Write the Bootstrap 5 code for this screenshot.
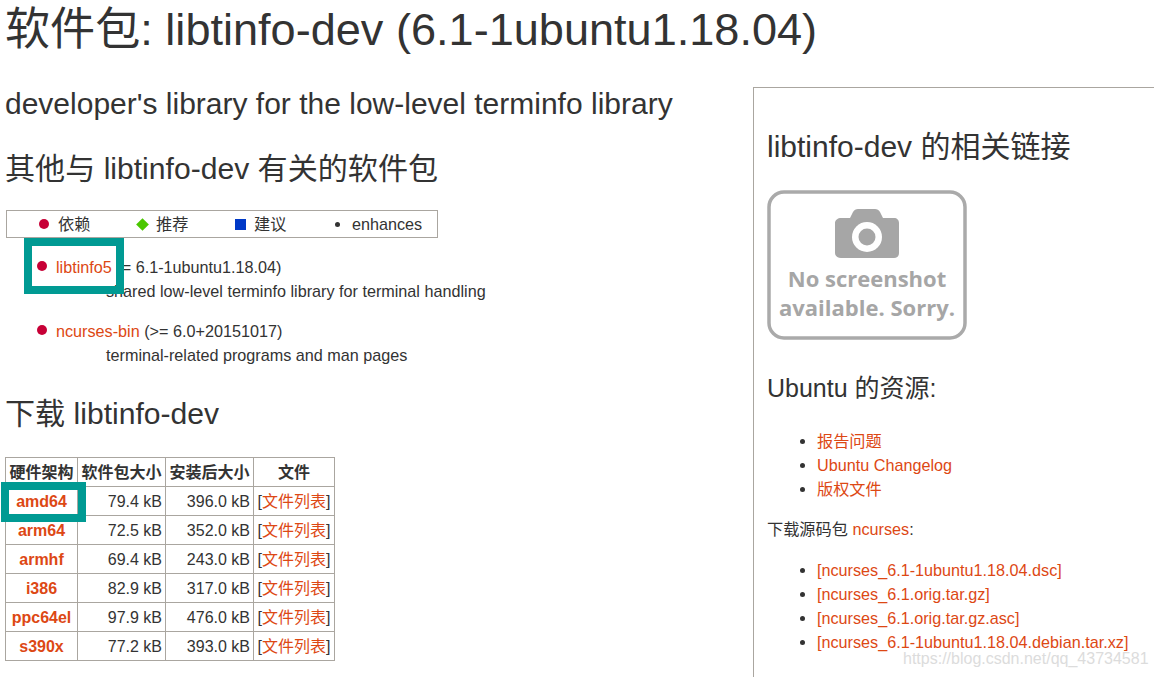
<!DOCTYPE html>
<html lang="zh">
<head>
<meta charset="utf-8">
<title>libtinfo-dev</title>
<link href="https://cdn.jsdelivr.net/npm/bootstrap@5.3.0/dist/css/bootstrap.min.css" rel="stylesheet">
<style>
html,body{height:677px;overflow:hidden}
body{font-family:"Liberation Sans","Noto Sans CJK SC",sans-serif;font-size:16.2px;color:#333;background:#fff;line-height:24px;position:relative}
a{color:#dd4814;text-decoration:none}
.page-wrap{padding-left:5px}
.pkg-title{font-size:45.1px;font-weight:400;line-height:48px;margin:6px 0 0;height:52px;color:#333}
.cols{display:flex;align-items:flex-start}
.main-col{width:748px;flex:none}
.side-col{flex:1;height:620px;margin-top:29px;border-left:1px solid #aaa6a0;border-top:1px solid #aaa6a0;padding:0 0 0 13px}
.tagline{font-size:30px;font-weight:400;line-height:34px;margin:29px 0 0;color:#333}
.sec-h{font-size:30.1px;font-weight:400;line-height:36px;margin:0;color:#333}
.sec-h.one{margin-top:30px}
.sec-h.two{margin-top:29px}
.legend-bar{width:432px;height:28px;border:1px solid #aaa6a0;margin:23px 0 0 1px;display:flex;line-height:27px}
.legend-bar span{display:flex;align-items:center;gap:9px;position:relative}
.lg1{margin-left:32px;width:98px}.lg2{width:98px}.lg3{width:98px}
.mk{display:inline-block;flex:none}
.dot{width:10px;height:10px;border-radius:50%;background:#c70036}
.dia{width:9px;height:9px;background:#4ac700;transform:rotate(45deg);margin-left:1px}
.sq{width:11px;height:11px;background:#0039c7;margin-right:-1px}
.pt{width:5px;height:5px;border-radius:50%;background:#333;margin:0 3px 0 2px}
.deps{margin:17px 0 0;padding:0;list-style:none}
.deps li{position:relative;padding-left:51px;margin-bottom:16px}
.deps .dot{position:absolute;left:32px;top:6px}
.deps .dsc{display:block;padding-left:50px}
.pkg-tbl{border-collapse:collapse;margin-top:25px;table-layout:fixed;width:329px;font-size:16px}
.pkg-tbl th,.pkg-tbl td{border:1px solid #aaa6a0;height:29px;padding:0;line-height:27px;white-space:nowrap}
.pkg-tbl thead th{text-align:center;color:#333;font-weight:700}
.pkg-tbl tbody th{text-align:center}
.pkg-tbl .sz{text-align:right;padding-right:3px}
.pkg-tbl .fl{text-align:center}
.side-h{font-size:30px;font-weight:400;line-height:36px;margin:41px 0 0;color:#333}
.shot{display:block;margin-top:25px}
.side-h2{font-size:25px;font-weight:400;line-height:30px;margin:33px 0 0;color:#333}
.link-list{padding-left:50px;list-style:disc}
.res-list{margin:26px 0 0}
.src-list{margin:17px 0 0}
.side-p{margin:16px 0 0}
.hl-box{position:absolute;border:8px solid #009a93;pointer-events:none}
.hl-a{left:24px;top:238px;width:100px;height:56px}
.hl-b{left:1px;top:482px;width:85px;height:40px}
.wm{position:absolute;left:903px;top:647px;font-size:16px;color:#dcdcdc;white-space:nowrap}
</style>
</head>
<body>
<div class="page-wrap">
<h1 class="pkg-title">软件包: libtinfo-dev (6.1-1ubuntu1.18.04)</h1>
<div class="cols">
<div class="main-col">
<h2 class="tagline">developer's library for the low-level terminfo library</h2>
<h2 class="sec-h one">其他与 libtinfo-dev 有关的软件包</h2>
<div class="legend-bar">
<span class="lg1"><i class="mk dot"></i>依赖</span>
<span class="lg2"><i class="mk dia"></i>推荐</span>
<span class="lg3"><i class="mk sq"></i>建议</span>
<span><i class="mk pt"></i>enhances</span>
</div>
<ul class="deps">
<li><i class="mk dot"></i><a href="#">libtinfo5</a> (= 6.1-1ubuntu1.18.04)<span class="dsc">shared low-level terminfo library for terminal handling</span></li>
<li><i class="mk dot"></i><a href="#">ncurses-bin</a> (&gt;= 6.0+20151017)<span class="dsc">terminal-related programs and man pages</span></li>
</ul>
<h2 class="sec-h two">下载 libtinfo-dev</h2>
<table class="pkg-tbl">
<colgroup><col style="width:72px"><col style="width:88px"><col style="width:88px"><col style="width:81px"></colgroup>
<thead><tr><th>硬件架构</th><th>软件包大小</th><th>安装后大小</th><th>文件</th></tr></thead>
<tbody>
<tr><th><a href="#">amd64</a></th><td class="sz">79.4 kB</td><td class="sz">396.0 kB</td><td class="fl">[<a href="#">文件列表</a>]</td></tr>
<tr><th><a href="#">arm64</a></th><td class="sz">72.5 kB</td><td class="sz">352.0 kB</td><td class="fl">[<a href="#">文件列表</a>]</td></tr>
<tr><th><a href="#">armhf</a></th><td class="sz">69.4 kB</td><td class="sz">243.0 kB</td><td class="fl">[<a href="#">文件列表</a>]</td></tr>
<tr><th><a href="#">i386</a></th><td class="sz">82.9 kB</td><td class="sz">317.0 kB</td><td class="fl">[<a href="#">文件列表</a>]</td></tr>
<tr><th><a href="#">ppc64el</a></th><td class="sz">97.9 kB</td><td class="sz">476.0 kB</td><td class="fl">[<a href="#">文件列表</a>]</td></tr>
<tr><th><a href="#">s390x</a></th><td class="sz">77.2 kB</td><td class="sz">393.0 kB</td><td class="fl">[<a href="#">文件列表</a>]</td></tr>
</tbody>
</table>
</div>
<aside class="side-col">
<h3 class="side-h">libtinfo-dev 的相关链接</h3>
<svg class="shot" width="200" height="150" viewBox="0 0 200 150" role="img" aria-label="No screenshot available">
<rect x="2" y="2" width="196" height="146" rx="15" fill="#fff" stroke="#aaa" stroke-width="3.5"/>
<path fill="#a6a6a6" d="M74 28h9l3-6c1-2 3-3 5-3h17c2 0 4 1 5 3l3 6h11c3 0 5 2 5 5v30c0 3-2 5-5 5H74c-3 0-6-2-6-5V33c0-3 3-5 6-5z"/>
<circle cx="100" cy="47" r="15" fill="#fff"/><circle cx="100" cy="47" r="8.5" fill="#a6a6a6"/>
<text x="100" y="97" text-anchor="middle" font-family="Open Sans" font-weight="700" font-size="22" fill="#a6a6a6">No screenshot</text>
<text x="100" y="126" text-anchor="middle" font-family="Open Sans" font-weight="700" font-size="22" fill="#a6a6a6">available. Sorry.</text>
</svg>
<h3 class="side-h2">Ubuntu 的资源:</h3>
<ul class="link-list res-list">
<li><a href="#">报告问题</a></li>
<li><a href="#">Ubuntu Changelog</a></li>
<li><a href="#">版权文件</a></li>
</ul>
<p class="side-p">下载源码包 <a href="#">ncurses</a>:</p>
<ul class="link-list src-list">
<li><a href="#">[ncurses_6.1-1ubuntu1.18.04.dsc]</a></li>
<li><a href="#">[ncurses_6.1.orig.tar.gz]</a></li>
<li><a href="#">[ncurses_6.1.orig.tar.gz.asc]</a></li>
<li><a href="#">[ncurses_6.1-1ubuntu1.18.04.debian.tar.xz]</a></li>
</ul>
</aside>
</div>
</div>
<div class="hl-box hl-a"></div>
<div class="hl-box hl-b"></div>
<div class="wm">https://blog.csdn.net/qq_43734581</div>
<script src="https://cdn.jsdelivr.net/npm/bootstrap@5.3.0/dist/js/bootstrap.bundle.min.js"></script>
</body>
</html>
